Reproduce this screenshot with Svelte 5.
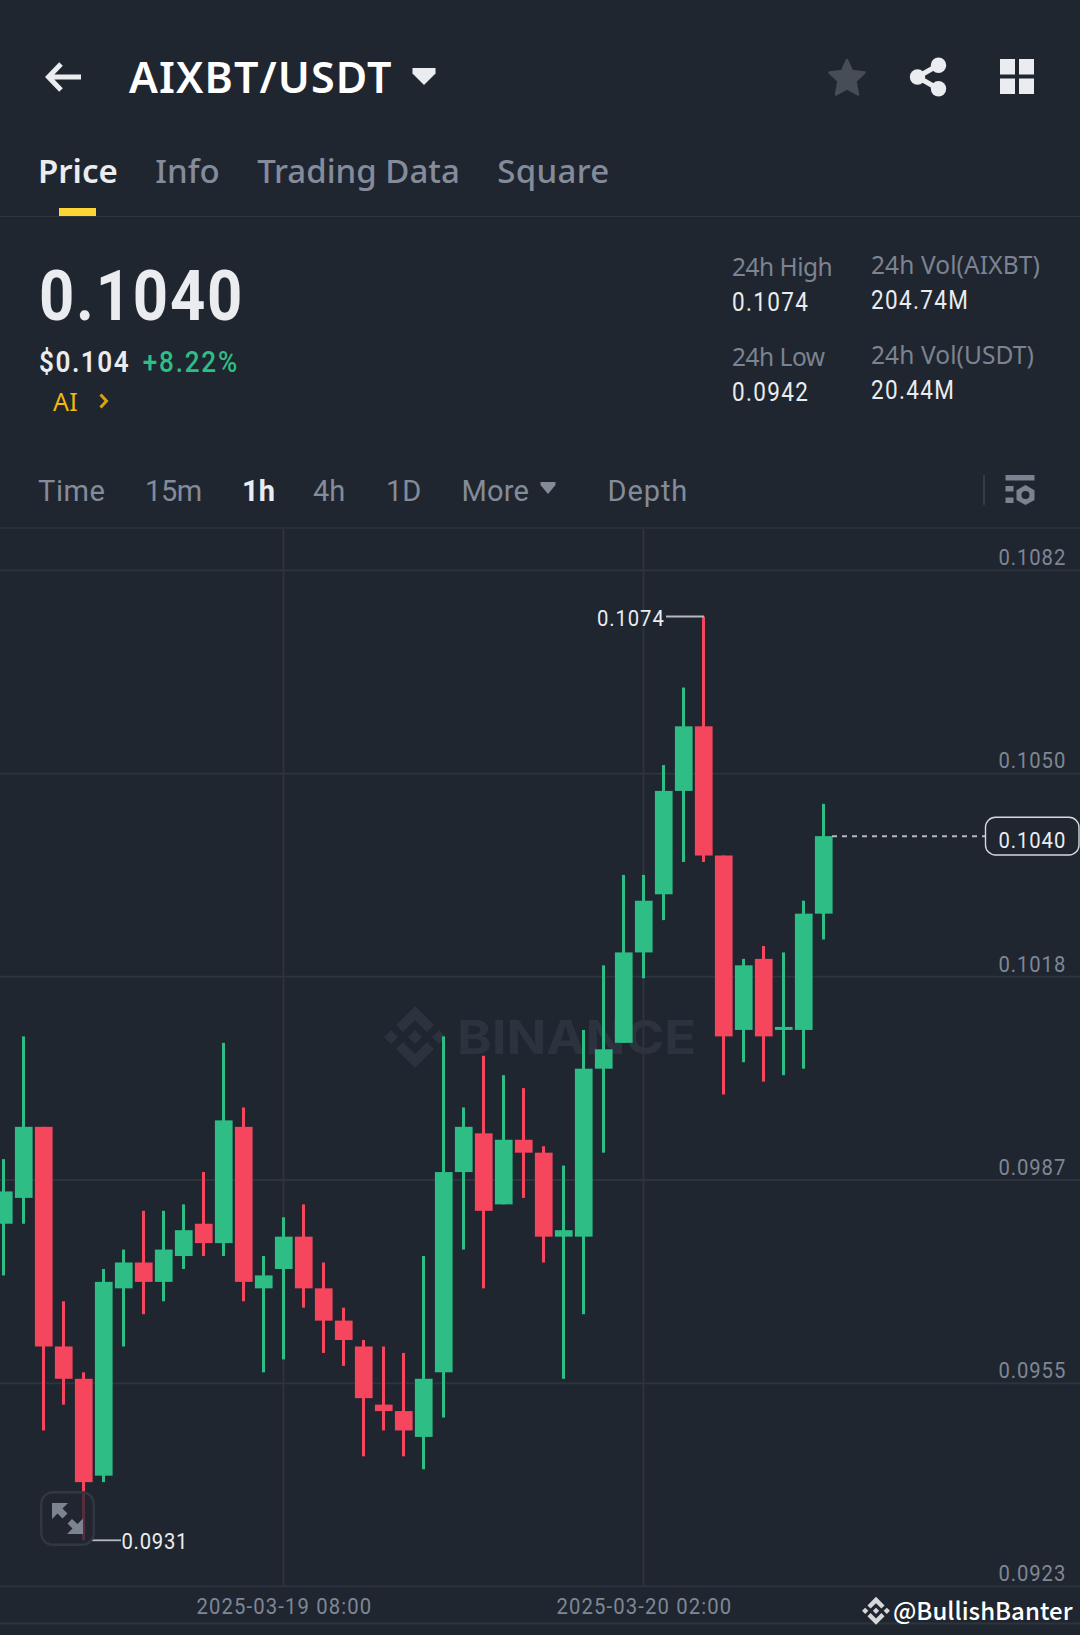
<script>
  const tabs = ['Price', 'Info', 'Trading Data', 'Square'];

  const stats = [
    [
      { label: '24h High', value: '0.1074' },
      { label: '24h Low', value: '0.0942' }
    ],
    [
      { label: '24h Vol(AIXBT)', value: '204.74M' },
      { label: '24h Vol(USDT)', value: '20.44M' }
    ]
  ];

  // Hourly candles as [open, high, low, close] in units of 0.0001
  const candles = [
    [980, 990, 972, 985], [984, 1009, 980, 995], [995, 995, 948, 961], [961, 968, 952, 956],
    [956, 957, 931, 940], [941, 973, 940, 971], [970, 976, 961, 974], [974, 982, 966, 971],
    [971, 982, 968, 976], [975, 983, 973, 979], [980, 988, 975, 977], [977, 1008, 975, 996],
    [995, 998, 968, 971], [970, 975, 957, 972], [973, 981, 959, 978], [978, 983, 967, 970],
    [970, 974, 960, 965], [965, 967, 958, 962], [961, 962, 944, 953], [952, 961, 948, 951],
    [951, 960, 944, 948], [947, 975, 942, 956], [957, 1009, 950, 988], [988, 998, 976, 995],
    [994, 1006, 970, 982], [983, 1003, 983, 993], [993, 1001, 984, 991], [991, 992, 974, 978],
    [978, 989, 956, 979], [978, 1010, 966, 1004], [1004, 1020, 991, 1007], [1008, 1034, 1008, 1022],
    [1022, 1034, 1018, 1030], [1031, 1051, 1027, 1047], [1047, 1063, 1036, 1057], [1057, 1074, 1036, 1037],
    [1037, 1037, 1000, 1009], [1010, 1021, 1005, 1020], [1021, 1023, 1002, 1009], [1010, 1022, 1003, 1010],
    [1010, 1030, 1004, 1028], [1028, 1045, 1024, 1040]
  ];

  const yOf = (p) => 616.5 + (1074 - p) * 6.46;

  const bars = candles.map(([o, h, l, c], i) => {
    const top = yOf(Math.max(o, c));
    const bottom = yOf(Math.min(o, c));
    const height = Math.max(3, bottom - top);
    return {
      x: 3.5 + i * 20,
      top: bottom - height,
      height,
      high: yOf(h),
      low: yOf(l),
      up: c >= o
    };
  });

  const levels = [
    { y: 570.3, text: '0.1082' },
    { y: 773.6, text: '0.1050' },
    { y: 976.7, text: '0.1018' },
    { y: 1180, text: '0.0987' },
    { y: 1383.4, text: '0.0955' },
    { y: 1586.4, text: '0.0923' }
  ];

  const times = [
    { x: 283.5, text: '2025-03-19 08:00' },
    { x: 643.5, text: '2025-03-20 02:00' }
  ];
</script>

{#snippet logo()}
  <path d="M0 -31 L19 -12 L12 -5 L0 -17 L-12 -5 L-19 -12 Z" />
  <path d="M0 31 L19 12 L12 5 L0 17 L-12 5 L-19 12 Z" />
  <path d="M-31 0 L-24 -7 L-17 0 L-24 7 Z M31 0 L24 -7 L17 0 L24 7 Z M0 -7 L7 0 L0 7 L-7 0 Z" />
{/snippet}

<!-- Narrow numerals spread to a given width -->
{#snippet figure(x, y, width, text)}
  <text transform="translate({x} {y}) scale(0.9 1)" textLength={width / 0.9}>{text}</text>
{/snippet}

<main>
  <header>
    <svg class="back" width="38" height="32" viewBox="0 0 38 32">
      <path d="M37 16H5M17 3L4.500 16L17 29" fill="none" stroke="#eaecef" stroke-width="5" />
    </svg>
    <h1>AIXBT/USDT</h1>
    <svg class="caret" width="24" height="19" viewBox="0 0 24 19">
      <path d="M0.500 1H23.500V6.500L12 18L0.500 6.500Z" fill="#eaecef" />
    </svg>
    <div class="actions">
      <svg width="38" height="40" viewBox="0 0 38 40">
        <path d="M19 3L24 14L36.500 15.500L27.500 24.200L30 37.500L19 31.500L8 37.500L10.500 24.200L1.500 15.500L14 14Z" fill="#474d57" stroke="#474d57" stroke-width="2.500" stroke-linejoin="round" />
      </svg>
      <svg width="38" height="40" viewBox="0 0 38 40">
        <path d="M29.500 8L8.500 20L29.500 32" fill="none" stroke="#eaecef" stroke-width="5" />
        <circle cx="8.500" cy="20" r="7.700" fill="#eaecef" />
        <circle cx="29.500" cy="8.200" r="7.700" fill="#eaecef" />
        <circle cx="29.500" cy="31.800" r="7.700" fill="#eaecef" />
      </svg>
      <svg width="34" height="35" viewBox="0 0 34 35">
        <path d="M0 0H15V15.500H0ZM19 0H34V15.500H19ZM0 19.500H15V35H0ZM19 19.500H34V35H19Z" fill="#eaecef" />
      </svg>
    </div>
  </header>

  <nav class="tabs">
    {#each tabs as tab, i}
      <span class="tab" class:active={i === 0}>{tab}</span>
    {/each}
  </nav>

  <section class="summary">
    <div class="quote">
      <div class="price">0.1040</div>
      <div class="sub"><span class="usd">$0.104</span><span class="gain">+8.22%</span></div>
      <div class="tag">
        <span>AI</span>
        <svg width="10" height="16" viewBox="0 0 10 16">
          <path d="M1.500 1.500L7.500 8L1.500 14.500" fill="none" stroke="#d9a30d" stroke-width="3" />
        </svg>
      </div>
    </div>
    <div class="stats">
      {#each stats as column}
        <dl>
          {#each column as s}
            <div class="stat">
              <dt>{s.label}</dt>
              <dd>{s.value}</dd>
            </div>
          {/each}
        </dl>
      {/each}
    </div>
  </section>

  <nav class="intervals">
    <span class="time">Time</span>
    <span class="m15">15m</span>
    <span class="selected">1h</span>
    <span class="h4">4h</span>
    <span class="d1">1D</span>
    <span class="more">More
      <svg width="16" height="12" viewBox="0 0 16 12"><path d="M0.500 0H15.500V3L8 12L0.500 3Z" fill="#848b99" /></svg>
    </span>
    <span class="depth">Depth</span>
    <div class="tools">
      <i></i>
      <svg width="30" height="32" viewBox="0 0 30 32">
        <path d="M0.500 1H29.500V6.500H0.500ZM0.500 12H8.500V17.500H0.500ZM0.500 23.500H8.500V29H0.500Z" fill="#7b8290" />
        <path fill-rule="evenodd" d="M20.500 11L29.500 16.200V26L20.500 31L11.500 26V16.200ZM20.500 17A4 4 0 1 0 20.500 25A4 4 0 1 0 20.500 17Z" fill="#7b8290" />
      </svg>
    </div>
  </nav>

  <svg class="chart" width="1080" height="1106" viewBox="0 529 1080 1106">
    <g class="grid">
      {#each levels as l}
        <line x1="0" x2="1080" y1={l.y} y2={l.y} />
      {/each}
      {#each times as t}
        <line x1={t.x} x2={t.x} y1="529" y2="1586" />
      {/each}
      <line x1="0" x2="1080" y1="1623.500" y2="1623.500" />
    </g>

    <g class="brand">
      <g transform="translate(415 1037)">{@render logo()}</g>
      <text x="457" y="1054" textLength="239" lengthAdjust="spacingAndGlyphs">BINANCE</text>
    </g>

    {#each bars as b}
      <g class={b.up ? 'up' : 'down'}>
        <rect x={b.x - 1.5} y={b.high} width="3" height={b.low - b.high} />
        <rect x={b.x - 8.6} y={b.top} width="17.700" height={b.height} />
      </g>
    {/each}

    <line class="dash" x1="832" x2="985" y1="836.300" y2="836.300" />
    <rect class="pill" x="985.500" y="817.300" width="93.500" height="37.700" rx="10" />

    <g class="axis">
      {#each levels as l}
        {@render figure(998.5, l.y - 5.2, 66.8, l.text)}
      {/each}
      {#each times as t}
        {@render figure(t.x - 87, 1614.3, 174.7, t.text)}
      {/each}
    </g>

    <g class="mark">
      {@render figure(998.5, 847.5, 66.8, '0.1040')}
      {@render figure(597, 625.5, 66.8, '0.1074')}
      {@render figure(121.5, 1549.3, 66, '0.0931')}
      <line x1="666" x2="704" y1="616.500" y2="616.500" />
      <line x1="92" x2="121" y1="1540.300" y2="1540.300" />
    </g>

    <g class="expand">
      <rect x="41.200" y="1492.200" width="52.600" height="52.600" rx="12" />
      <path d="M52 1503H68L62.500 1508.500L67.500 1513.500L62.500 1518.500L57.500 1513.500L52 1519Z" />
      <path d="M83 1534H67L72.500 1528.500L67.500 1523.500L72 1519L77.500 1524L83 1518.500Z" />
    </g>

    <g class="author">
      <g transform="translate(876 1610.800) scale(0.450)">{@render logo()}</g>
      <text x="893" y="1619.800" textLength="179.500">@BullishBanter</text>
    </g>
  </svg>
</main>

<style>
  :global(body) {
    background: #202630;
  }
  main {
    width: 1080px;
    height: 1635px;
    overflow: hidden;
    background: #202630;
    color: #eaecef;
    font-family: 'Noto Sans', sans-serif;
  }
  svg {
    display: block;
    flex: none;
  }
  header {
    box-sizing: border-box;
    height: 140px;
    padding: 13px 46px 0 44px;
    display: flex;
    align-items: center;
  }
  h1 {
    margin: 0 0 0 47px;
    width: 266px;
    font-size: 43px;
    font-weight: 650;
    line-height: 60px;
    letter-spacing: 1.1px;
    color: #fff;
    white-space: nowrap;
  }
  .caret {
    margin-left: 17px;
    margin-top: -1px;
  }
  .actions {
    margin-left: auto;
    display: flex;
    align-items: center;
    gap: 43px;
  }
  .actions svg:nth-child(3) {
    margin-left: 10px;
  }
  .tabs {
    box-sizing: border-box;
    height: 77px;
    padding-left: 38px;
    border-bottom: 1px solid #2e3540;
    display: flex;
    gap: 37.5px;
  }
  .tab {
    position: relative;
    font-size: 33px;
    font-weight: 500;
    line-height: 62px;
    color: #848c9b;
    white-space: nowrap;
  }
  .tab.active {
    color: #eaecef;
    font-weight: 600;
  }
  .tab:last-child {
    letter-spacing: 0.3px;
  }
  .tab.active::after {
    content: '';
    position: absolute;
    left: 21px;
    bottom: 0;
    width: 37px;
    height: 8px;
    background: #fcd535;
  }
  .summary {
    display: flex;
    height: 237px;
    padding-left: 39px;
  }
  .quote {
    width: 693px;
    padding-top: 40px;
  }
  .price {
    font: 700 70px/78px Roboto, sans-serif;
    letter-spacing: 2px;
    transform: scaleX(0.88);
    transform-origin: left;
  }
  .sub {
    display: flex;
    gap: 14px;
    font: 600 29px/54px Roboto, sans-serif;
    letter-spacing: 1.7px;
    transform: scaleX(0.9);
    transform-origin: left;
  }
  .gain {
    font-weight: 500;
    letter-spacing: 2px;
    color: #2ebd85;
  }
  .tag {
    display: flex;
    align-items: center;
    gap: 21px;
    padding-left: 14px;
    font-size: 25px;
    line-height: 24px;
    letter-spacing: 0.3px;
    color: #f0b90b;
  }
  .stats {
    display: flex;
  }
  dl {
    margin: 0;
    width: 139px;
    padding-top: 32px;
    white-space: nowrap;
  }
  dl + dl {
    padding-top: 29.6px;
  }
  .stat {
    height: 90px;
  }
  dt {
    font-size: 24.5px;
    line-height: 36px;
    letter-spacing: -0.5px;
    color: #7c8391;
  }
  dl + dl dt {
    letter-spacing: 0.1px;
  }
  dd {
    margin: 0;
    font: 450 25px/36px Roboto, sans-serif;
    letter-spacing: 1.5px;
    transform: scaleX(0.9);
    transform-origin: left;
  }
  .intervals {
    box-sizing: border-box;
    height: 75px;
    padding: 0 45px 0 38px;
    border-bottom: 2px solid #282e38;
    display: flex;
    align-items: center;
    font: 400 29px/40px Roboto, sans-serif;
    color: #848b99;
  }
  .intervals > span {
    flex: none;
    white-space: nowrap;
  }
  .time {
    width: 107px;
    letter-spacing: 0.6px;
  }
  .m15 {
    width: 97px;
    letter-spacing: -0.4px;
  }
  .selected {
    width: 71px;
    color: #eaecef;
    font-weight: 700;
  }
  .h4 { width: 73px; }
  .d1 { width: 75.5px; }
  .more {
    width: 146px;
    display: flex;
    align-items: center;
    gap: 11px;
    letter-spacing: 0.2px;
  }
  .more svg {
    margin-top: -6px;
  }
  .depth {
    letter-spacing: 0.9px;
  }
  .tools {
    margin-left: auto;
    margin-top: -2px;
    display: flex;
    align-items: center;
    gap: 20px;
  }
  .tools i {
    width: 2px;
    height: 30px;
    background: #353b46;
  }
  .grid line {
    stroke: #2d343f;
    stroke-width: 1.8;
  }
  .brand {
    fill: #2d333e;
  }
  .brand text {
    font: 700 47px Inter, sans-serif;
  }
  .up {
    fill: #2ebd85;
  }
  .down {
    fill: #f6465d;
  }
  .dash {
    stroke: #b4b8bf;
    stroke-width: 1.9;
    stroke-dasharray: 5 5;
  }
  .pill {
    fill: #202630;
    stroke: #d5d8dc;
    stroke-width: 1.4;
  }
  .axis text,
  .mark text {
    font: 400 22.5px Roboto, sans-serif;
    fill: #7f8694;
  }
  .mark text {
    font-weight: 450;
    fill: #eaecef;
  }
  .mark line {
    stroke: #b4b8bf;
    stroke-width: 1.8;
  }
  .expand rect {
    fill: #202630;
    fill-opacity: 0.75;
    stroke: #323843;
    stroke-width: 2.4;
  }
  .expand path {
    fill: #7c8391;
  }
  .author {
    fill: #d5d7da;
  }
  .author text {
    font: 500 24px 'Noto Sans CJK SC', sans-serif;
    fill: #fff;
  }
</style>
